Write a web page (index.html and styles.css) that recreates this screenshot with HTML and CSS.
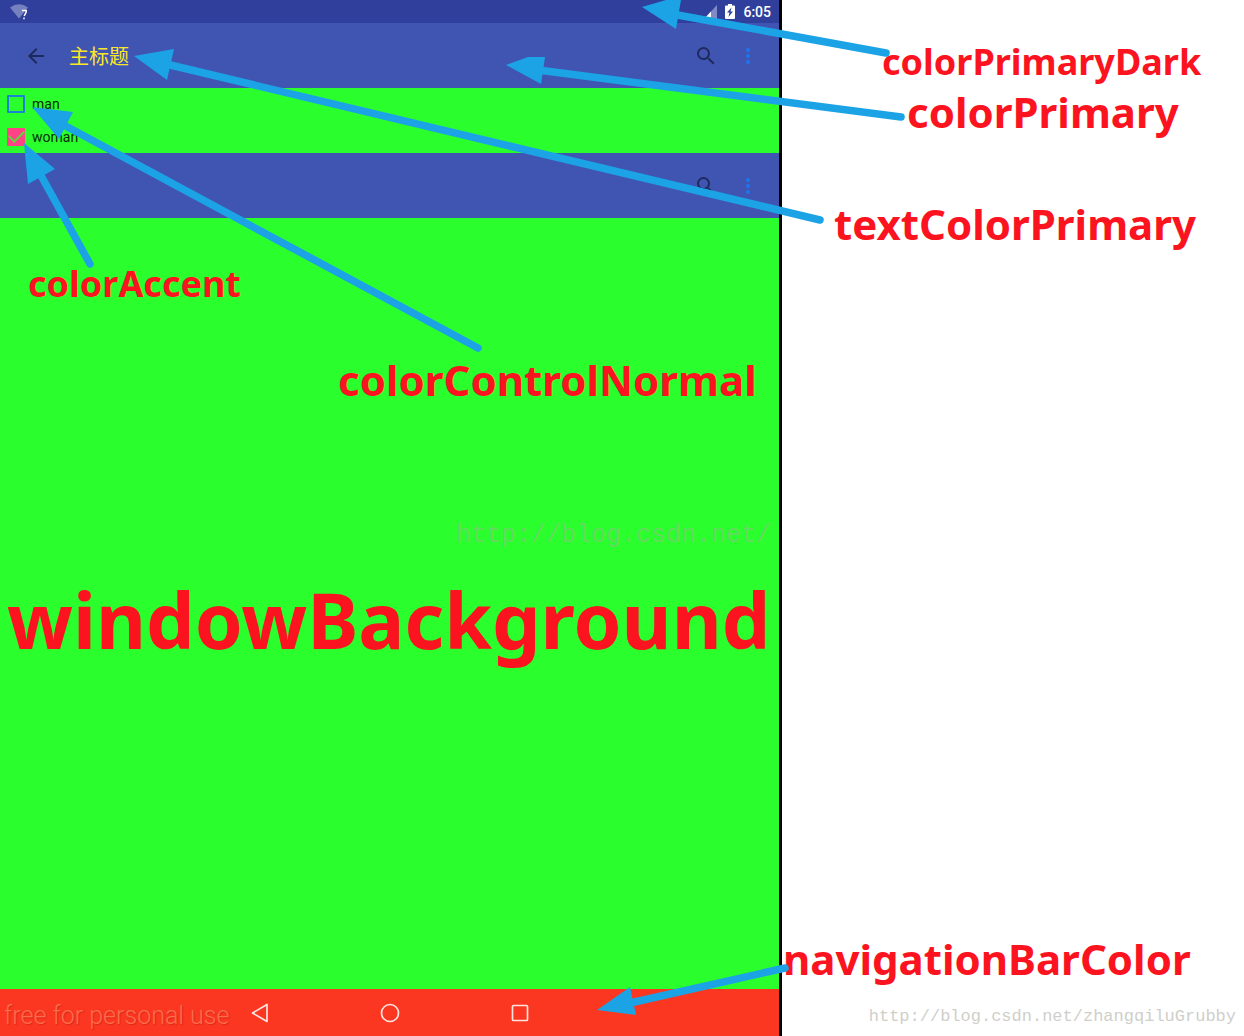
FILE: index.html
```html
<!DOCTYPE html>
<html lang="zh-CN">
<head>
<meta charset="utf-8">
<title>Material theme colors</title>
<link rel="stylesheet" href="styles.css">
</head>
<body>
<div class="page">
  <main class="phone">
    <header class="status-bar">
      <svg class="wifi" width="20" height="16" viewBox="0 0 20 16" aria-hidden="true">
        <path d="M0 3.500Q9-3 18 3.500L9 14.500Z" fill="#7681bf"/>
        <path d="M12 6.500h4.200v1.600L14.200 12M14 13.400v1.800" fill="none" stroke="#fff" stroke-width="1.500"/>
      </svg>
      <div class="status-icons">
        <svg width="13" height="14" viewBox="0 0 13 14" aria-hidden="true">
          <path d="M13 0v14H0Z" fill="#808bc5"/>
          <path d="M7 6.500V14H0Z" fill="#fff"/>
        </svg>
        <svg width="10" height="15" viewBox="0 0 10 15" aria-hidden="true">
          <path d="M3 0h4v1.500h2q1 0 1 1V14q0 1-1 1H1q-1 0-1-1V2.500q0-1 1-1h2Z" fill="#fff"/>
          <path d="M6.500 3.500 2 8.500h2.500L3.500 13 8 7.500H5.500Z" fill="#303f9b"/>
        </svg>
        <span class="clock">6:05</span>
      </div>
    </header>

    <div class="toolbar">
      <button class="icon-button" type="button" aria-label="Back">
        <svg width="24" height="24" viewBox="0 0 24 24"><path d="M20 11H7.830l5.590-5.590L12 4l-8 8 8 8 1.410-1.410L7.830 13H20z" fill="#1f2a5c"/></svg>
      </button>
      <h1 class="title">主标题</h1>
      <div class="actions">
        <button class="icon-button" type="button" aria-label="Search">
          <svg width="24" height="24" viewBox="0 0 24 24"><path d="M15.500 14h-.79l-.28-.27A6.470 6.470 0 0 0 16 9.500 6.500 6.500 0 1 0 9.500 16c1.610 0 3.090-.59 4.230-1.570l.27.28v.79l5 4.990L20.490 19l-4.990-5zm-6 0C7.010 14 5 11.990 5 9.500S7.010 5 9.500 5 14 7.010 14 9.500 11.990 14 9.500 14z" fill="#1f2a5c"/></svg>
        </button>
        <button class="icon-button" type="button" aria-label="More options">
          <svg width="24" height="24" viewBox="0 0 24 24" fill="#1976f0"><circle cx="12" cy="6" r="2"/><circle cx="12" cy="12" r="2"/><circle cx="12" cy="18" r="2"/></svg>
        </button>
      </div>
    </div>

    <div class="options">
      <label class="option"><input class="checkbox" type="checkbox"><span>man</span></label>
      <label class="option"><input class="checkbox" type="checkbox" checked><span>woman</span></label>
    </div>

    <div class="toolbar">
      <div class="actions">
        <button class="icon-button" type="button" aria-label="Search">
          <svg width="24" height="24" viewBox="0 0 24 24"><path d="M15.500 14h-.79l-.28-.27A6.470 6.470 0 0 0 16 9.500 6.500 6.500 0 1 0 9.500 16c1.610 0 3.090-.59 4.230-1.570l.27.28v.79l5 4.990L20.490 19l-4.990-5zm-6 0C7.010 14 5 11.990 5 9.500S7.010 5 9.500 5 14 7.010 14 9.500 11.990 14 9.500 14z" fill="#1f2a5c"/></svg>
        </button>
        <button class="icon-button" type="button" aria-label="More options">
          <svg width="24" height="24" viewBox="0 0 24 24" fill="#1976f0"><circle cx="12" cy="6" r="2"/><circle cx="12" cy="12" r="2"/><circle cx="12" cy="18" r="2"/></svg>
        </button>
      </div>
    </div>

    <section class="window">
      <p class="note note-small accent">colorAccent</p>
      <p class="note control">colorControlNormal</p>
      <p class="mark mark-large">http://blog.csdn.net/</p>
      <p class="note note-large">windowBackground</p>
    </section>

    <nav class="nav-bar">
      <span class="license">free for personal use</span>
      <button class="icon-button" type="button" aria-label="Back">
        <svg width="24" height="24" viewBox="0 0 24 24" fill="none" stroke="#ffe3df" stroke-width="1.700"><path d="M19 3.500v17L4.500 12Z" stroke-linejoin="round"/></svg>
      </button>
      <button class="icon-button" type="button" aria-label="Home">
        <svg width="24" height="24" viewBox="0 0 24 24" fill="none" stroke="#ffe3df" stroke-width="1.700"><circle cx="12" cy="12" r="8.500"/></svg>
      </button>
      <button class="icon-button" type="button" aria-label="Recent apps">
        <svg width="24" height="24" viewBox="0 0 24 24" fill="none" stroke="#ffe3df" stroke-width="1.700"><rect x="4.500" y="4.500" width="15" height="15" rx="1"/></svg>
      </button>
    </nav>
  </main>

  <aside class="legend">
    <p class="note note-small primary-dark">colorPrimaryDark</p>
    <p class="note primary">colorPrimary</p>
    <p class="note text-primary">textColorPrimary</p>
    <p class="note navigation">navigationBarColor</p>
    <p class="mark">http://blog.csdn.net/zhangqiluGrubby</p>
  </aside>

  <svg class="arrows" width="1244" height="1036" viewBox="0 0 1244 1036" aria-hidden="true">
    <g fill="none" stroke="#1ca3e6" stroke-width="7.500" stroke-linecap="round">
      <path d="M672 14 886 53"/>
      <path d="M538 70 901 117"/>
      <path d="M166 64 820 220"/>
      <path d="M62 124 478 348"/>
      <path d="M39 172 90 264"/>
      <path d="M630 1003 785 968"/>
    </g>
    <g fill="#1ca3e6">
      <path d="M642 7 666 0H681L676 29Z"/>
      <path d="M506 65 528 57H545L541 84Z"/>
      <path d="M134 56 174 49 167 80Z"/>
      <path d="M32 107 73 112 59 139Z"/>
      <path d="M24 143 55 169 28 184Z"/>
      <path d="M597 1010 630 987 636 1015Z"/>
    </g>
  </svg>
</div>
</body>
</html>
```
FILE: styles.css
```css
* {
  box-sizing: border-box;
}

body {
  margin: 0;
  background: #fff;
  font-family: Roboto, "Noto Sans CJK SC", sans-serif;
}

h1,
p {
  margin: 0;
}

.page {
  position: relative;
  display: grid;
  grid-template-columns: 782fr 462fr;
  min-height: 100vh;
  overflow: hidden;
}

.phone {
  display: flex;
  flex-direction: column;
  min-width: 0;
  border-right: 3px solid #000;
  background: #2aff2d;
}

.status-bar {
  display: flex;
  align-items: center;
  justify-content: space-between;
  height: 23px;
  padding: 0 8px 0 10px;
  background: #303f9b;
}

.status-icons {
  display: flex;
  align-items: center;
  gap: 8px;
}

.clock {
  color: #fff;
  font-size: 14px;
  font-weight: 500;
  line-height: 24px;
}

.toolbar {
  display: flex;
  align-items: center;
  height: 65px;
  padding: 0 19px 0 24px;
  background: #4055b2;
}

.icon-button {
  display: flex;
  padding: 0;
  border: 0;
  background: none;
}

.title {
  padding-top: 3px;
  margin-left: 21px;
  color: #fde725;
  font-size: 20px;
  font-weight: 400;
  line-height: 28px;
}

.actions {
  display: flex;
  gap: 18px;
  margin-left: auto;
}

.options {
  display: flex;
  flex-direction: column;
  height: 65px;
}

.option {
  display: flex;
  flex: 1;
  align-items: center;
  gap: 7px;
  padding-left: 7px;
  color: #062b08;
  font-size: 14px;
}

.checkbox {
  width: 18px;
  height: 18px;
  margin: 0;
  border: 2px solid #1c83d2;
  border-radius: 1px;
  appearance: none;
}

.checkbox:checked {
  display: grid;
  place-content: center;
  border: 0;
  background: #ff4385;
}

.checkbox:checked::before {
  width: 13px;
  height: 7px;
  margin-bottom: 4px;
  border: solid #62d440;
  border-width: 0 0 2px 2px;
  content: "";
  transform: rotate(-45deg);
}

.window {
  display: flex;
  flex: 1;
  flex-direction: column;
  padding-top: 42px;
}

.note {
  color: #fb1320;
  font-family: "Noto Sans", sans-serif;
  font-size: 42px;
  font-weight: 700;
  line-height: 48px;
  white-space: nowrap;
}

.note-small {
  font-size: 36px;
}

.note-large {
  margin-top: 16px;
  padding-left: 7px;
  font-size: 77px;
  line-height: 104px;
}

.accent {
  padding-left: 28px;
}

.control {
  margin-top: 48px;
  padding-left: 338px;
}

.mark {
  color: #cfcfca;
  font-family: "Liberation Mono", monospace;
  font-size: 17px;
  line-height: 24px;
  white-space: nowrap;
}

.mark-large {
  margin-top: 116px;
  padding-right: 8px;
  color: #62db5e;
  font-size: 25px;
  line-height: 32px;
  text-align: right;
}

.nav-bar {
  position: relative;
  display: flex;
  align-items: center;
  justify-content: center;
  gap: 106px;
  height: 47px;
  background: #fb3621;
}

.license {
  position: absolute;
  bottom: 4px;
  left: 4px;
  color: #fb6c4b;
  font-size: 25px;
  font-weight: 300;
  line-height: 32px;
  text-shadow: 1px 1px 1px #d92c1a;
}

.legend {
  display: flex;
  flex-direction: column;
  min-width: 0;
  padding: 38px 0 7px;
}

.primary-dark {
  padding-left: 100px;
}

.primary {
  margin-top: 2px;
  padding-left: 125px;
}

.text-primary {
  margin-top: 64px;
  padding-left: 52px;
}

.navigation {
  padding-left: 1px;
  margin-top: auto;
}

.legend .mark {
  margin-top: 22px;
  padding-right: 8px;
  text-align: right;
}

.arrows {
  position: absolute;
  top: 0;
  left: 0;
  pointer-events: none;
}
```
